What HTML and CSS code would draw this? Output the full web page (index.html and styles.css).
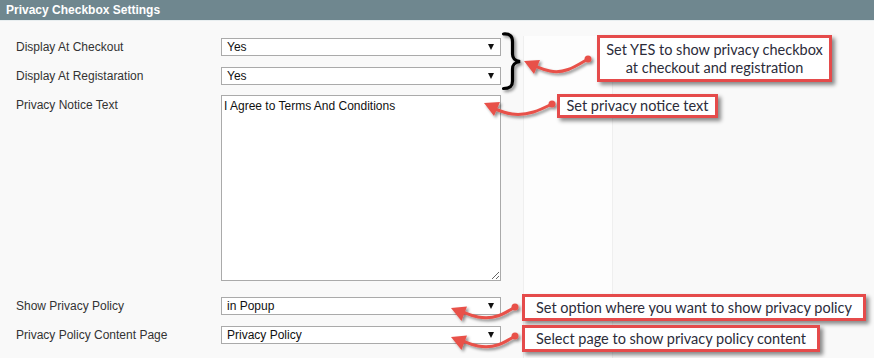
FILE: index.html
```html
<!DOCTYPE html>
<html>
<head>
<meta charset="utf-8">
<link rel="stylesheet" href="styles.css">
</head>
<body>
<div class="page">
  <div class="header">Privacy Checkbox Settings</div>
  <div class="form">
    <div class="row r1">
      <div class="label">Display At Checkout</div>
      <div class="select"><span>Yes</span><i class="caret"></i></div>
    </div>
    <div class="row r2">
      <div class="label">Display At Registaration</div>
      <div class="select"><span>Yes</span><i class="caret"></i></div>
    </div>
    <div class="row r3 top">
      <div class="label">Privacy Notice Text</div>
      <textarea class="textarea" readonly>I Agree to Terms And Conditions</textarea>
    </div>
    <div class="row r4">
      <div class="label">Show Privacy Policy</div>
      <div class="select"><span>in Popup</span><i class="caret"></i></div>
    </div>
    <div class="row r5">
      <div class="label">Privacy Policy Content Page</div>
      <div class="select"><span>Privacy Policy</span><i class="caret"></i></div>
    </div>
  </div>

  <svg class="annot" width="874" height="358" viewBox="0 0 874 358">
    <defs>
      <filter id="sh" x="-50%" y="-50%" width="200%" height="200%">
        <feDropShadow dx="2" dy="2" stdDeviation="1.5" flood-color="#000" flood-opacity="0.45"/>
      </filter>
    </defs>
    <path filter="url(#sh)" d="M503.5,34 C510,33.5 512.5,36 512.5,42 L512.5,54 C512.5,58.5 514.5,60.5 520,61.5 C514.5,62.5 512.5,64.5 512.5,69 L512.5,81 C512.5,86.5 510,88.5 503.5,88.5" fill="none" stroke="#000" stroke-width="3.2" stroke-linecap="round"/>
    <g fill="#e8514a" stroke="#e8514a" filter="url(#sh)">
      <circle cx="588" cy="59" r="3.5" stroke="none"/>
      <path d="M588,59 C576,66 565,74 550,71 C544,70 540,68 535,66" fill="none" stroke-width="3"/>
      <polygon points="524,61 540,60 534,74" stroke="none"/>

      <circle cx="552" cy="104" r="3.5" stroke="none"/>
      <path d="M552,104 C540,110 528,116 512,114 C505,113 500,111 495,109" fill="none" stroke-width="3"/>
      <polygon points="484,103 500,102 494,116" stroke="none"/>

      <circle cx="515" cy="307" r="3.5" stroke="none"/>
      <path d="M515,307 C504,314 494,320 478,317 C472,316 468,314 463,312" fill="none" stroke-width="3"/>
      <polygon points="451,308 467,306.5 461.5,321" stroke="none"/>

      <circle cx="515" cy="336" r="3.5" stroke="none"/>
      <path d="M515,336 C504,343 494,349 478,346 C472,345 468,343 463,341" fill="none" stroke-width="3"/>
      <polygon points="451,337 467,335.5 461.5,350" stroke="none"/>
    </g>
  </svg>

  <div class="callout c1">Set YES to show privacy checkbox<br>at checkout and registration</div>
  <div class="callout c2">Set privacy notice text</div>
  <div class="callout c3">Set option where you want to show privacy policy</div>
  <div class="callout c4">Select page to show privacy policy content</div>
</div>
</body>
</html>
```

FILE: styles.css
```css
html, body {
  margin: 0;
  padding: 0;
  background: #f9f9f9;
}
.page {
  position: relative;
  width: 874px;
  height: 358px;
  overflow: hidden;
  font-family: "Liberation Sans", Arial, sans-serif;
  font-size: 12px;
  color: #333;
}
.header {
  height: 20px;
  line-height: 20px;
  padding-left: 6px;
  background: #6f878f;
  border-bottom: 1px solid #e8eef0;
  color: #fff;
  font-weight: bold;
  font-size: 12px;
}
.form {
  height: 337px;
  box-sizing: border-box;
  padding-top: 17px;
  background-image: linear-gradient(to right,
    transparent 523px, #efefef 523px, #efefef 524px,
    #fdfdfd 524px, #fdfdfd 612px, #efefef 612px, #efefef 613px,
    transparent 613px);
  background-repeat: no-repeat;
  background-position: 0 15px;
  background-size: 100% 100%;
}
.row {
  display: flex;
  align-items: center;
}
.row.top {
  align-items: flex-start;
}
.r2 { margin-top: 11px; }
.r3 { margin-top: 10px; }
.r4 { margin-top: 16px; }
.r5 { margin-top: 11px; }
.label {
  width: 205px;
  padding-left: 16px;
  line-height: 18px;
  color: #333;
}
.row.top .label {
  padding-top: 1px;
}
.select {
  box-sizing: border-box;
  width: 280px;
  height: 18px;
  border: 1px solid #aaa;
  background: #fff;
  display: flex;
  align-items: center;
  justify-content: space-between;
  padding: 0 6px 0 5px;
  color: #111;
  font-size: 12px;
  font-weight: normal;
}
.caret {
  width: 0;
  height: 0;
  border-left: 3.5px solid transparent;
  border-right: 3.5px solid transparent;
  border-top: 6px solid #111;
}
.textarea {
  box-sizing: border-box;
  width: 280px;
  height: 186px;
  margin: 0;
  border: 1px solid #aaa;
  background: #fff;
  padding: 3px 2px;
  font-family: "Liberation Sans", Arial, sans-serif;
  font-size: 12px;
  color: #111;
  resize: both;
  outline: none;
}
.annot {
  position: absolute;
  left: 0;
  top: 0;
  pointer-events: none;
}
.callout {
  position: absolute;
  box-sizing: border-box;
  background: #fff;
  border: 3px solid #e54b4b;
  box-shadow: 3px 3px 4px rgba(0, 0, 0, 0.45);
  font-family: Lato, "Open Sans", sans-serif;
  font-size: 14.5px;
  color: #2c2c3a;
  display: flex;
  align-items: center;
  justify-content: center;
  text-align: center;
  line-height: 18px;
  white-space: nowrap;
}
.c1 { left: 597px; top: 35px; width: 235px; height: 47px; }
.c2 { left: 557px; top: 94px; width: 161px; height: 24px; }
.c3 { left: 522px; top: 294px; width: 344px; height: 27px; }
.c4 { left: 522px; top: 325px; width: 298px; height: 27px; }
```
